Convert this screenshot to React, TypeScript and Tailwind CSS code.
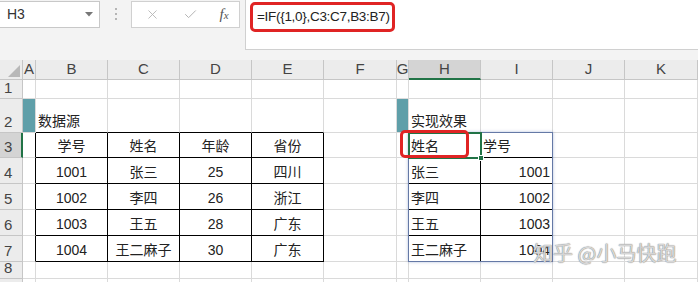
import { X, Check } from "lucide-react";

const COLS = ["A", "B", "C", "D", "E", "F", "G", "H", "I", "J", "K"];

// cell content: [text, align]
const data: Record<string, [string, "l" | "c" | "r"]> = {
  B2: ["数据源", "l"],
  H2: ["实现效果", "l"],
  B3: ["学号", "c"],
  C3: ["姓名", "c"],
  D3: ["年龄", "c"],
  E3: ["省份", "c"],
  H3: ["姓名", "l"],
  I3: ["学号", "l"],
  B4: ["1001", "c"],
  C4: ["张三", "c"],
  D4: ["25", "c"],
  E4: ["四川", "c"],
  H4: ["张三", "l"],
  I4: ["1001", "r"],
  B5: ["1002", "c"],
  C5: ["李四", "c"],
  D5: ["26", "c"],
  E5: ["浙江", "c"],
  H5: ["李四", "l"],
  I5: ["1002", "r"],
  B6: ["1003", "c"],
  C6: ["王五", "c"],
  D6: ["28", "c"],
  E6: ["广东", "c"],
  H6: ["王五", "l"],
  I6: ["1003", "r"],
  B7: ["1004", "c"],
  C7: ["王二麻子", "c"],
  D7: ["30", "c"],
  E7: ["广东", "c"],
  H7: ["王二麻子", "l"],
  I7: ["1004", "r"],
};

const inTable = (c: string, r: number) =>
  r >= 3 && r <= 7 && ["B", "C", "D", "E", "H", "I"].includes(c);

const Cell = ({ col, row }: { col: string; row: number }) => {
  const rightBlack =
    inTable(col, row) || (row >= 3 && row <= 7 && (col === "A" || col === "G"));
  const bottomBlack =
    inTable(col, row) || (row === 2 && ["B", "C", "D", "E", "H", "I"].includes(col));
  const teal = row === 2 && (col === "A" || col === "G");
  const cell = data[`${col}${row}`];
  const align = cell?.[1];

  return (
    <div
      className={`flex items-end pb-[2px] border-r border-b whitespace-nowrap ${
        rightBlack ? "border-r-black" : "border-r-[#dadada]"
      } ${bottomBlack ? "border-b-black" : "border-b-[#dadada]"} ${
        teal ? "bg-[#5f9fa9]" : "bg-white"
      } ${
        align === "c"
          ? "justify-center"
          : align === "r"
          ? "justify-end pr-[2px]"
          : "justify-start pl-[2px]"
      }`}
    >
      {cell && <span className="leading-[18px]">{cell[0]}</span>}
    </div>
  );
};

export default function App() {
  const rows = [1, 2, 3, 4, 5, 6, 7, 8, 9];

  return (
    <div
      className="relative w-[698px] h-[282px] overflow-hidden bg-[#f3f3f3] text-[14px] text-[#222]"
      style={{ fontFamily: '"Liberation Sans", "Noto Sans CJK SC", sans-serif' }}
    >
      {/* toolbar: name box + buttons + formula bar */}
      <div className="flex h-[60px]">
        <div className="w-[100px] h-[27px] mt-[1px] bg-white border border-l-0 border-[#c8c8c8] flex items-center justify-between pl-[7px] pr-[6px]">
          <span className="text-[14px] text-[#333]">H3</span>
          <svg width="8" height="5" viewBox="0 0 8 5">
            <polygon points="0,0 8,0 4,4.5" fill="#777" />
          </svg>
        </div>
        <div className="w-[31px] h-[28px] flex flex-col items-center justify-center gap-[3px]">
          <span className="w-[2px] h-[2px] bg-[#b5b5b5]" />
          <span className="w-[2px] h-[2px] bg-[#b5b5b5]" />
          <span className="w-[2px] h-[2px] bg-[#b5b5b5]" />
        </div>
        <div className="w-[109px] h-[27px] mt-[1px] bg-white border border-[#d0d0d0] flex items-center">
          <div className="w-[38px] flex justify-center ml-[1px]">
            <X size={15} strokeWidth={1.4} color="#b3b3b3" />
          </div>
          <div className="w-[38px] flex justify-center">
            <Check size={15} strokeWidth={1.6} color="#b3b3b3" />
          </div>
          <div
            className="flex-1 flex justify-center items-baseline italic text-[#555]"
            style={{ fontFamily: '"Liberation Serif", serif' }}
          >
            <span className="text-[15px]">f</span>
            <span className="text-[11px]">x</span>
          </div>
        </div>
        <div className="ml-[5px] flex-1 h-[50px] bg-white border-l border-b border-[#d0d0d0]">
          <div className="ml-[4px] mt-[2px] w-[145px] h-[30px] border-[3px] border-[#e02424] rounded-[5px] flex items-center pl-[4px]">
            <span className="text-[13.5px] text-[#222] whitespace-nowrap tracking-[-0.3px]">
              =IF({"{"}1,0{"}"},C3:C7,B3:B7)
            </span>
          </div>
        </div>
      </div>

      {/* sheet grid */}
      <div className="relative grid grid-cols-[23px_13px_72px_72px_72px_72px_73px_12px_72px_72px_72px_73px] grid-rows-[20px_19px_34px_25px_26px_26px_26px_26px_17px_20px]">
        {/* corner */}
        <div className="bg-[#ececec] border-r border-b border-[#c6c6c6] flex items-end justify-end pr-[2px] pb-[2px]">
          <svg width="12" height="12" viewBox="0 0 12 12">
            <polygon points="12,0 12,12 0,12" fill="#b8b8b8" />
          </svg>
        </div>
        {COLS.map((c) => (
          <div
            key={c}
            className={`flex items-center justify-center text-[15px] text-[#444] border-r border-r-[#c6c6c6] ${
              c === "H"
                ? "bg-[#d4d4d4] border-b-2 border-b-[#217346]"
                : "bg-[#ececec] border-b border-b-[#c6c6c6]"
            }`}
          >
            {c}
          </div>
        ))}

        {rows.map((r) => (
          <div key={r} className="contents">
            <div
              className={`flex items-end pl-[4px] pb-[1px] text-[15px] text-[#444] border-b border-b-[#c6c6c6] leading-[18px] ${
                r === 3
                  ? "bg-[#d4d4d4] border-r-2 border-r-[#217346]"
                  : "bg-[#ececec] border-r border-r-[#c6c6c6]"
              }`}
            >
              {r}
            </div>
            {COLS.map((c) => (
              <Cell key={c} col={c} row={r} />
            ))}
          </div>
        ))}

        {/* range highlight H3:I7 */}
        <div className="absolute left-[408px] top-[72px] w-[145px] h-[130px] border border-[#6579a6] shadow-[0_0_3px_rgba(90,120,180,0.45)] pointer-events-none" />
        {/* active cell H3 */}
        <div className="absolute left-[408px] top-[72px] w-[74px] h-[27px] border-2 border-[#217346] pointer-events-none">
          <span className="absolute -right-[4px] -bottom-[4px] w-[6px] h-[6px] bg-[#217346] border border-white" />
        </div>
        {/* red annotation around H3 */}
        <div className="absolute left-[400px] top-[70px] w-[69px] h-[28px] border-[3px] border-[#e02424] rounded-[5px] pointer-events-none" />
      </div>

      {/* watermark */}
      <div
        className="absolute left-[533px] top-[238px] text-[20px] text-white/70 whitespace-nowrap [text-shadow:0_0_1px_#777,0_0_1px_#999] pointer-events-none"
        style={{ fontFamily: '"Noto Sans CJK SC", sans-serif' }}
      >
        知乎 @小马快跑
      </div>
    </div>
  );
}
